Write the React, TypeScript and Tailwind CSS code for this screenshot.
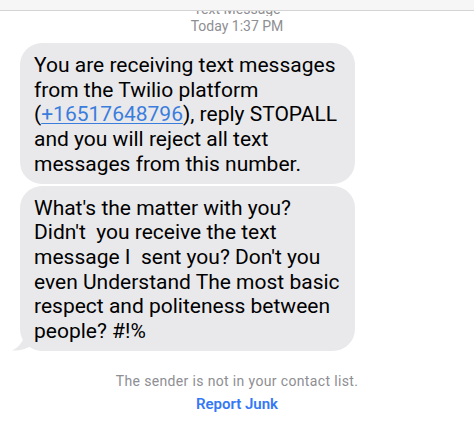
const FONT = { fontFamily: "Roboto, 'Liberation Sans', sans-serif" };

function Bubble(props: { lines: React.ReactNode[]; tail?: boolean; className?: string }) {
  return (
    <div className={`relative ml-[20px] w-[335px] ${props.className ?? ""}`}>
      {props.tail ? (
        <svg className="absolute -left-[9px] bottom-0" width="30" height="22" viewBox="0 0 30 22">
          <path d="M14 0 C14 10 10 17 1 21.5 C9 22 15 20 20 17 L30 22 L30 0 Z" fill="#e9e9eb" />
        </svg>
      ) : null}
      <div className="relative rounded-[22px] bg-[#e9e9eb] pl-[14px] pr-[8px] pt-[10px] pb-[7px] text-[21px] leading-[24.7px] text-black whitespace-nowrap">
        {props.lines.map((l, i) => (
          <div key={i}>{l}</div>
        ))}
      </div>
    </div>
  );
}

export default function App() {
  return (
    <div className="w-[474px] h-[427px] overflow-hidden bg-white" style={FONT}>
      <div className="h-[11px] bg-[#f6f6f6] border-b border-[#d4d4d4]" />
      <div className="h-[5px] overflow-hidden flex items-end justify-center">
        <span className="text-[14px] leading-[14px] text-[#8e8e93]">Text Message</span>
      </div>
      <div className="flex justify-center text-[14px] leading-[18px] text-[#8e8e93] mt-[1px]">Today 1:37 PM</div>

      <Bubble
        className="mt-[8px]"
        lines={[
          "You are receiving text messages",
          "from the Twilio platform",
          <>
            (<span className="text-[#3b7ddd] underline decoration-1 underline-offset-2">+16517648796</span>), reply STOPALL
          </>,
          "and you will reject all text",
          "messages from this number.",
        ]}
      />

      <Bubble
        className="mt-[2px]"
        tail
        lines={[
          "What's the matter with you?",
          "Didn't\u00a0 you receive the text",
          "message I\u00a0 sent you? Don't you",
          "even Understand The most basic",
          "respect and politeness between",
          "people? #!%",
        ]}
      />

      <div className="mt-[21px] flex justify-center text-[14px] leading-[18px] tracking-[0.35px] text-[#8e8e93]">
        The sender is not in your contact list.
      </div>
      <div className="mt-[5px] flex justify-center text-[15px] leading-[18px] font-semibold text-[#3478f6]">
        Report Junk
      </div>
    </div>
  );
}
